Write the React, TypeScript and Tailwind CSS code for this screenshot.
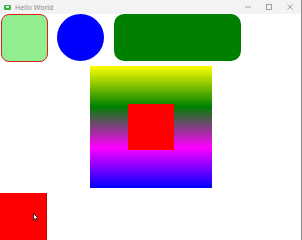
import React from "react";

export default function App() {
  return (
    <div className="relative w-[302px] h-[240px] overflow-hidden bg-white border-r border-[#8a8a8a]" style={{ fontFamily: '"Segoe UI", "Noto Sans", "Liberation Sans", sans-serif' }}>
      <div className="flex items-center h-[14px] bg-[#f3f3f3]">
        <div className="ml-[4px] w-[7px] h-[5px] rounded-[1px] bg-[#3cb043] flex items-center justify-center">
          <div className="w-[3px] h-[2px] bg-[#d6f5d6]" />
        </div>
        <span className="ml-[4px] text-[7px] leading-none text-[#8d8d8d]">Hello World</span>
        <div className="ml-auto flex items-center h-full text-[#8a8a8a]">
          <svg width="6" height="6" viewBox="0 0 6 6" className="mr-[15px]"><line x1="0" y1="3" x2="6" y2="3" stroke="#8a8a8a" strokeWidth="0.8" /></svg>
          <svg width="6" height="6" viewBox="0 0 6 6" className="mr-[15px]"><rect x="0.5" y="0.5" width="5" height="5" fill="none" stroke="#8a8a8a" strokeWidth="0.8" /></svg>
          <svg width="6" height="6" viewBox="0 0 6 6" className="mr-[8px]"><path d="M0.5 0.5 L5.5 5.5 M5.5 0.5 L0.5 5.5" stroke="#8a8a8a" strokeWidth="0.8" /></svg>
        </div>
      </div>
      <div className="flex flex-col">
        <div className="flex items-start">
          <div className="ml-[1px] w-[47px] h-[48px] rounded-[8px] border border-[#e0201f] bg-[#90ee90]" />
          <div className="ml-[9px] w-[47px] h-[47px] rounded-full bg-[#0000ff]" />
          <div className="ml-[10px] w-[127px] h-[47px] rounded-[10px] bg-[#008000]" />
        </div>
        <div
          className="mt-[4px] ml-[90px] w-[122px] h-[122px] flex items-center justify-center"
          style={{ background: "linear-gradient(#ffff00, #008000, #ff00ff, #0000ff)" }}
        >
          <div className="w-[46px] h-[46px] bg-[#ff0000]" />
        </div>
        <div className="mt-[5px] relative w-[47px] h-[47px] bg-[#ff0000] border-r border-[#c00000]">
          <svg className="absolute left-[33px] top-[20px]" width="6" height="9" viewBox="0 0 6 9">
            <path d="M0.5 0.5 L0.5 7 L2 5.6 L3.2 8.3 L4.2 7.9 L3 5.3 L5 5.2 Z" fill="#ffffff" stroke="#000000" strokeWidth="0.7" />
          </svg>
        </div>
      </div>
    </div>
  );
}
